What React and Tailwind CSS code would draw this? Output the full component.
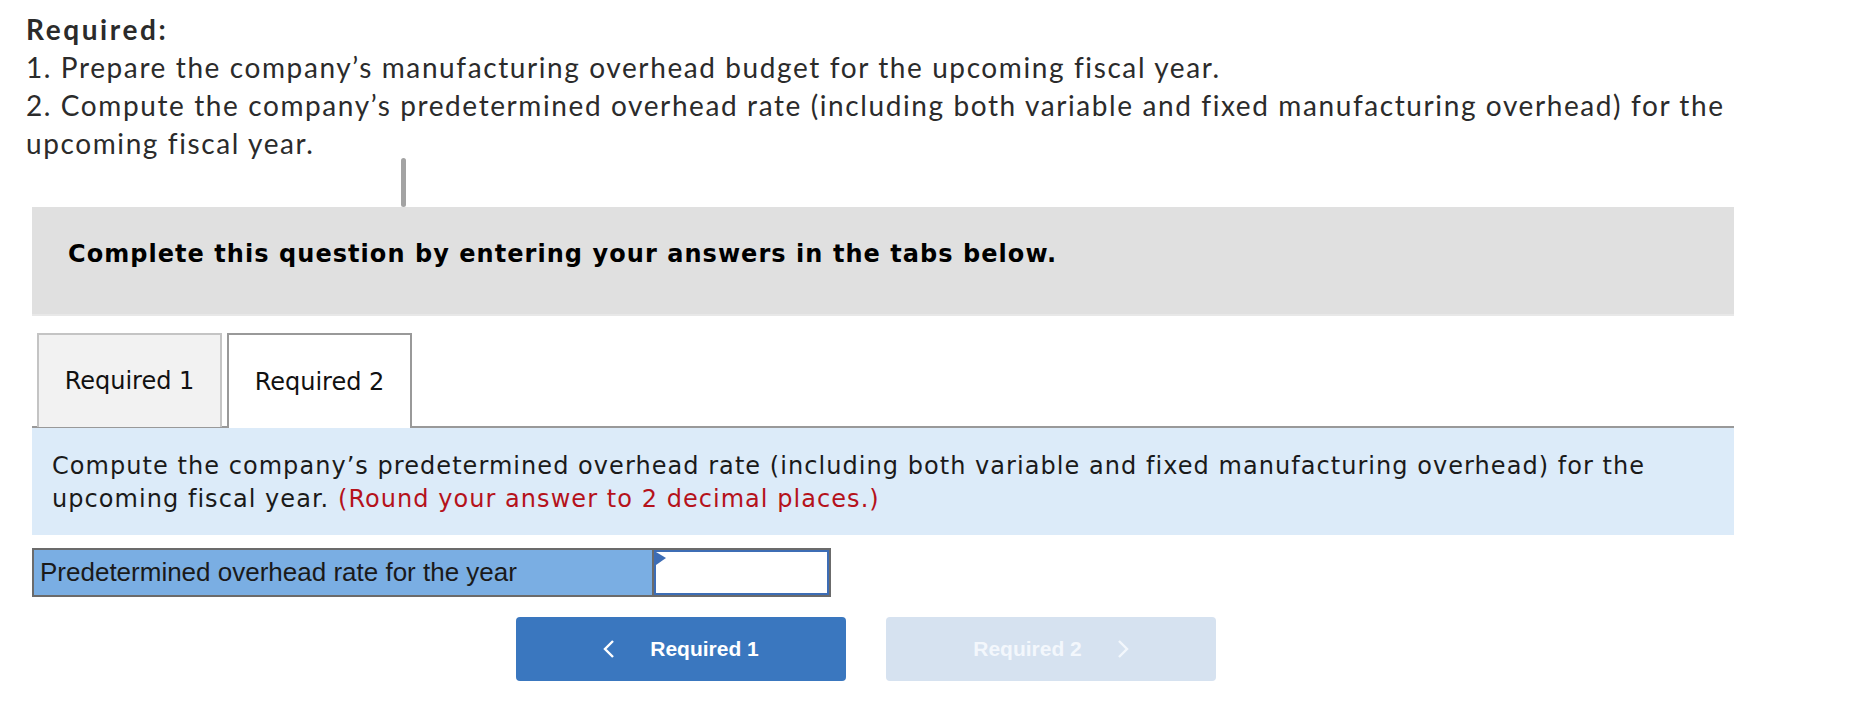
export default function App() {
  const proxima = { fontFamily: "Lato, 'Open Sans', sans-serif" };
  const verdana = { fontFamily: "'DejaVu Sans', Verdana, sans-serif" };
  const helv = { fontFamily: "'Liberation Sans', Arial, sans-serif" };
  return (
    <div className="w-[1850px] h-[719px] bg-white overflow-hidden">
      <div className="pl-[26px] pt-[10px] text-[28px] leading-[38px] tracking-[1.6px] text-[#2b2b2b]" style={proxima}>
        <div className="font-bold tracking-[2.6px]">Required:</div>
        <div>1. Prepare the company’s manufacturing overhead budget for the upcoming fiscal year.</div>
        <div>
          2. Compute the company’s predetermined overhead rate (including both variable and fixed manufacturing overhead) for the
          <br />
          upcoming fiscal year.
        </div>
      </div>
      <div className="ml-[401px] -mt-[4px] h-[49px] w-[5px] rounded-full bg-[#a3a3a3]" />
      <div className="ml-[32px] w-[1702px] h-[109px] bg-[#e0e0e0] border-b-2 border-[#e8e8e8] pl-[36px] pt-[32px]">
        <div className="text-[24px] leading-[30px] tracking-[1.05px] font-bold text-black" style={verdana}>
          Complete this question by entering your answers in the tabs below.
        </div>
      </div>
      <div className="ml-[32px] w-[1702px] mt-[17px] flex border-b-2 border-[#999999] pl-[5px]">
        <div className="-mb-[2px] w-[185px] h-[94px] flex items-center justify-center bg-[#f2f2f2] border-2 border-b-0 border-[#c4c4c4] text-[24px] text-[#111]" style={verdana}>
          Required 1
        </div>
        <div className="-mb-[2px] ml-[5px] w-[185px] h-[95px] flex items-center justify-center bg-white border-2 border-b-0 border-[#999999] text-[24px] text-[#111]" style={verdana}>
          Required 2
        </div>
      </div>
      <div className="ml-[32px] w-[1702px] h-[107px] bg-[#dcebf9] pl-[20px] pt-[22px] text-[24px] leading-[33px] tracking-[1.05px] text-[#1a1a1a]" style={verdana}>
        Compute the company’s predetermined overhead rate (including both variable and fixed manufacturing overhead) for the
        <br />
        upcoming fiscal year. <span className="text-[#b5121b]">(Round your answer to 2 decimal places.)</span>
      </div>
      <div className="ml-[32px] mt-[13px] w-[799px] h-[49px] flex border-2 border-[#6b6b6b]">
        <div className="w-[620px] h-full bg-[#7aaee3] border-r-2 border-[#6b6b6b] flex items-center pl-[6px] text-[26px] text-[#1a1a1a]" style={helv}>
          Predetermined overhead rate for the year
        </div>
        <div className="relative flex-1 h-full bg-white border-2 border-[#3d6db5]">
          <svg className="absolute left-0 top-0" width="11" height="14" viewBox="0 0 11 14">
            <polygon points="0,0 10,6 0,13" fill="#3d6db5" />
          </svg>
        </div>
      </div>
      <div className="mt-[20px] ml-[516px] flex gap-[40px]" style={helv}>
        <button className="w-[330px] h-[64px] rounded-[4px] bg-[#3a77bf] flex items-center justify-center gap-[35px] text-white font-bold text-[21px]">
          <svg width="12" height="18" viewBox="0 0 12 18">
            <polyline points="10,1 2,9 10,17" fill="none" stroke="white" strokeWidth="2.4" />
          </svg>
          <span>Required 1</span>
        </button>
        <button className="w-[330px] h-[64px] rounded-[4px] bg-[#d6e2f0] flex items-center justify-center gap-[35px] text-[#f3f7fc] font-bold text-[21px]">
          <span>Required 2</span>
          <svg width="12" height="18" viewBox="0 0 12 18">
            <polyline points="2,1 10,9 2,17" fill="none" stroke="#f3f7fc" strokeWidth="2.4" />
          </svg>
        </button>
      </div>
    </div>
  );
}
